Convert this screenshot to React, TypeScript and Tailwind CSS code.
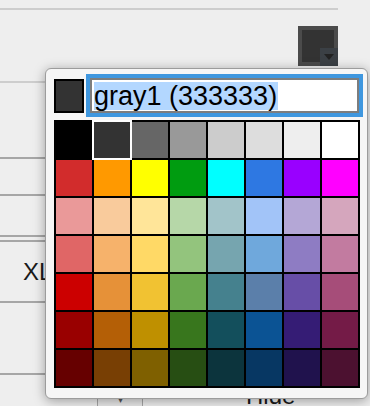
const ROWS: string[][] = [
  ['#000000', '#333333', '#666666', '#999999', '#cccccc', '#dddddd', '#eeeeee', '#ffffff'],
  ['#d22c2c', '#ff9900', '#ffff00', '#009c10', '#00ffff', '#2e78e2', '#9900ff', '#ff00ff'],
  ['#ea9999', '#f9cb9c', '#ffe599', '#b6d7a8', '#a2c4c9', '#a2c4f8', '#b4a7d6', '#d5a6bd'],
  ['#e06666', '#f6b26b', '#ffd966', '#93c47d', '#76a5af', '#6fa8dc', '#8e7cc3', '#c27ba0'],
  ['#cc0000', '#e69138', '#f1c232', '#6aa84f', '#45818e', '#5b7faa', '#674ea7', '#a64d79'],
  ['#990000', '#b45f06', '#bf9000', '#38761d', '#134f5c', '#0b5394', '#351c75', '#741b47'],
  ['#660000', '#783f04', '#7f6000', '#274e13', '#0c343d', '#073763', '#20124d', '#4c1130'],
]

const selected = '#333333'

function Line({ light }: { light?: boolean }) {
  return <div className={`h-[2px] w-[338px] ${light ? 'bg-[#cdcdcd]' : 'bg-[#a6a6a6]'}`} />
}

export default function App() {
  return (
    <div className="relative w-[370px] h-[406px] overflow-hidden bg-[#eeeeee] font-['Liberation_Sans',Arial,sans-serif] text-[#1a1a1a]">
      {/* background panel rows */}
      <div className="h-[8px]" />
      <Line light />
      <div className="h-[71px] flex justify-end pr-[32px] pt-[16px]">
        <div className="relative w-[40px] h-[40px] bg-[#333333] border-4 border-[#4b4b4b]">
          <div className="absolute right-[-4px] bottom-[-4px] w-[18px] h-[18px] bg-[#3b4045] flex items-center justify-center">
            <svg width="10" height="6" viewBox="0 0 10 6">
              <path d="M0 0 L10 0 L5 6 Z" fill="#222222" />
            </svg>
          </div>
        </div>
      </div>
      <Line light />
      <div className="h-[74px]" />
      <Line />
      <div className="h-[35px]" />
      <Line />
      <div className="h-[39px]" />
      <Line />
      <div className="h-[3px]" />
      <Line />
      <div className="h-[59px] flex items-center pl-[23px] text-[24px] leading-[24px]">XL</div>
      <Line />
      <div className="h-[70px]" />
      <Line />
      <div className="h-[40px] flex items-start">
        <div className="ml-[97px] w-[46px] h-full border-x border-[#a6a6a6] bg-[#e8e8e8] flex justify-center pt-[20px] text-[10px] leading-[10px] text-[#555]">▾</div>
        <div className="ml-[103px] pt-[9px] text-[24px] leading-[24px]">Hide</div>
      </div>

      {/* colour popup */}
      <div className="absolute left-[45px] top-[68px] w-[323px] h-[331px] rounded-[6px] border border-[#9c9c9c] bg-[#f6f6f6] shadow-[0_2px_12px_rgba(0,0,0,0.35)] pl-[8px] pt-[5px]">
        <div className="flex items-center gap-[2px]">
          <div className="w-[30px] h-[34px] border-2 border-black bg-[#333333]" />
          <div className="w-[277px] h-[43px] bg-[#3f97df] p-[4px]">
            <div className="h-full bg-white border-2 border-[#7d7d7d] flex items-center pl-[2px]">
              <span className="bg-[#b3d7ff] text-black text-[27px] leading-[28px] pr-[1px]">gray1 (333333)</span>
            </div>
          </div>
        </div>
        <div className="mt-[3px] w-[306px] bg-black p-[2px] grid grid-cols-8 gap-[2px]">
          {ROWS.flat().map((c, i) => (
            <div
              key={i}
              className={`h-[36px] ${c === selected ? 'outline-2 outline-white' : ''}`}
              style={{ backgroundColor: c }}
            />
          ))}
        </div>
      </div>
    </div>
  )
}
